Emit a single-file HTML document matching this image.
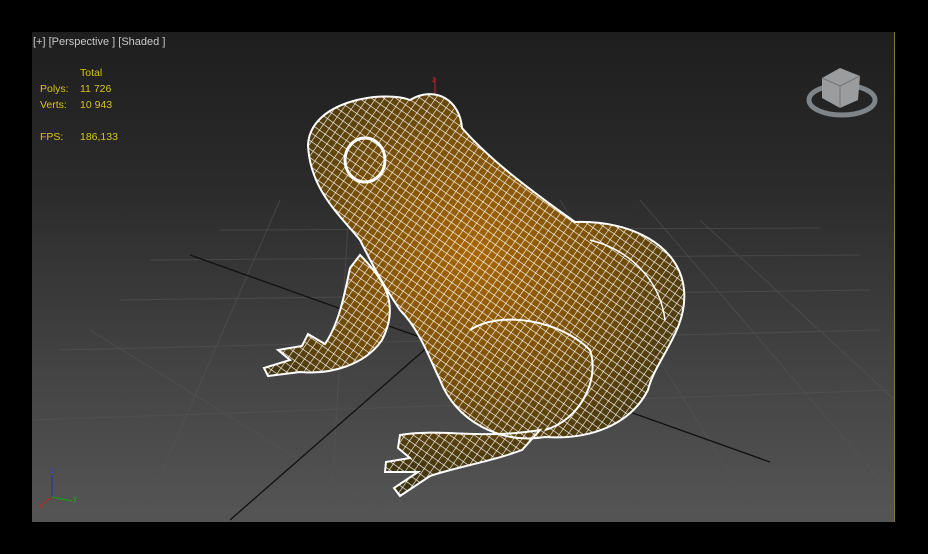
<!DOCTYPE html>
<html><head><style>
html,body{margin:0;padding:0;background:#000;width:928px;height:554px;overflow:hidden;font-family:"Liberation Sans",sans-serif}
#vp{position:absolute;left:32px;top:32px;width:863px;height:490px;background:linear-gradient(#1e1e1e 0%,#2a2a2a 30%,#444 70%,#555 100%);overflow:hidden}
.t{position:absolute;font-size:10.5px;color:#d8c21a}
#lab{position:absolute;left:33px;top:36px;font-size:11px;color:#c8c8c8}
#bd{position:absolute;left:894px;top:32px;width:1px;height:490px;background:#8a7530}
</style></head><body>
<div id="vp">
<svg width="863" height="490" viewBox="32 32 863 490" style="position:absolute;left:0;top:0">
<defs>
<pattern id="mesh" width="7" height="7" patternUnits="userSpaceOnUse" patternTransform="rotate(35)">
<path d="M0,0H7M0,0V7" stroke="#fff" stroke-width="1.2" fill="none"/>
</pattern>
<radialGradient id="sk" cx="0.5" cy="0.4" r="0.6">
<stop offset="0" stop-color="#a86606"/><stop offset="0.5" stop-color="#7a5008"/><stop offset="1" stop-color="#3a3212"/>
</radialGradient>
</defs>
<g stroke="#555" stroke-width="1" opacity="0.6">
<path d="M120,300 L870,290"/><path d="M60,350 L880,330"/><path d="M32,420 L890,390"/><path d="M150,260 L860,255"/><path d="M220,230 L820,228"/>
<path d="M280,200 L140,522"/><path d="M350,190 L330,522"/><path d="M640,200 L880,480"/><path d="M700,220 L895,400"/><path d="M560,200 L760,522"/><path d="M90,330 L400,522"/>
</g>
<path d="M190,255 L770,462" stroke="#111" stroke-width="1.3"/>
<path d="M230,520 L430,345" stroke="#111" stroke-width="1.3"/>
<path d="M435,78 L435,110" stroke="#c22" stroke-width="1"/>
<text x="432" y="82" font-size="8" fill="#c22">z</text>
<g>
<path id="b" d="M308,145 C310,100 385,90 410,100 C435,85 460,100 462,128 C490,160 530,190 575,222 C630,220 680,245 684,290 C688,330 655,360 648,390 C630,425 590,440 545,437 C500,445 455,420 440,380 C430,360 420,330 400,310 C380,280 370,260 360,240 C340,215 310,190 308,145 Z M360,255 C385,280 400,305 382,340 C365,365 330,375 300,372 L268,376 L264,368 L290,360 L278,350 L302,346 L308,334 L325,344 C338,325 344,298 350,268 Z M400,435 C440,428 480,440 540,430 L522,450 C490,462 460,466 430,476 L400,496 L394,488 L418,472 L385,472 L386,462 L410,458 L398,448 Z" fill="url(#sk)"/>
<path d="M308,145 C310,100 385,90 410,100 C435,85 460,100 462,128 C490,160 530,190 575,222 C630,220 680,245 684,290 C688,330 655,360 648,390 C630,425 590,440 545,437 C500,445 455,420 440,380 C430,360 420,330 400,310 C380,280 370,260 360,240 C340,215 310,190 308,145 Z M360,255 C385,280 400,305 382,340 C365,365 330,375 300,372 L268,376 L264,368 L290,360 L278,350 L302,346 L308,334 L325,344 C338,325 344,298 350,268 Z M400,435 C440,428 480,440 540,430 L522,450 C490,462 460,466 430,476 L400,496 L394,488 L418,472 L385,472 L386,462 L410,458 L398,448 Z" fill="url(#mesh)" stroke="#fff" stroke-width="2"/>
<ellipse cx="365" cy="160" rx="20" ry="22" fill="none" stroke="#fff" stroke-width="3"/>
<path d="M470,330 C500,310 560,320 590,350 C600,380 580,420 545,430" fill="none" stroke="#fff" stroke-width="2"/>
<path d="M590,240 C630,250 660,280 665,320" fill="none" stroke="#fff" stroke-width="1.5"/>
</g>
<ellipse cx="842" cy="100" rx="33" ry="15" fill="none" stroke="#7f8488" stroke-width="5"/>
<path d="M822,78 L840,68 L860,76 L858,100 L840,108 L822,98 Z" fill="#9a9c9e"/>
<path d="M840,86 L860,76 M840,86 L840,108 M840,86 L822,78" stroke="#777" stroke-width="1"/>
<path d="M52,497 L52,475" stroke="#2233aa" stroke-width="1"/>
<path d="M52,497 L72,501" stroke="#1a9a1a" stroke-width="1.3"/>
<path d="M52,497 L43,504" stroke="#b22" stroke-width="1"/>
<text x="50" y="473" font-size="8" fill="#3344cc">z</text>
<text x="73" y="501" font-size="8" fill="#2a2">y</text>
<text x="39" y="508" font-size="8" fill="#c22">x</text>
</svg>
</div>
<div id="bd"></div>
<div id="lab">[+] [Perspective ] [Shaded ]</div>
<div class="t" style="left:80px;top:67px">Total</div>
<div class="t" style="left:40px;top:83px">Polys:</div><div class="t" style="left:80px;top:83px">11 726</div>
<div class="t" style="left:40px;top:99px">Verts:</div><div class="t" style="left:80px;top:99px">10 943</div>
<div class="t" style="left:40px;top:131px">FPS:</div><div class="t" style="left:80px;top:131px">186,133</div>
</body></html>
